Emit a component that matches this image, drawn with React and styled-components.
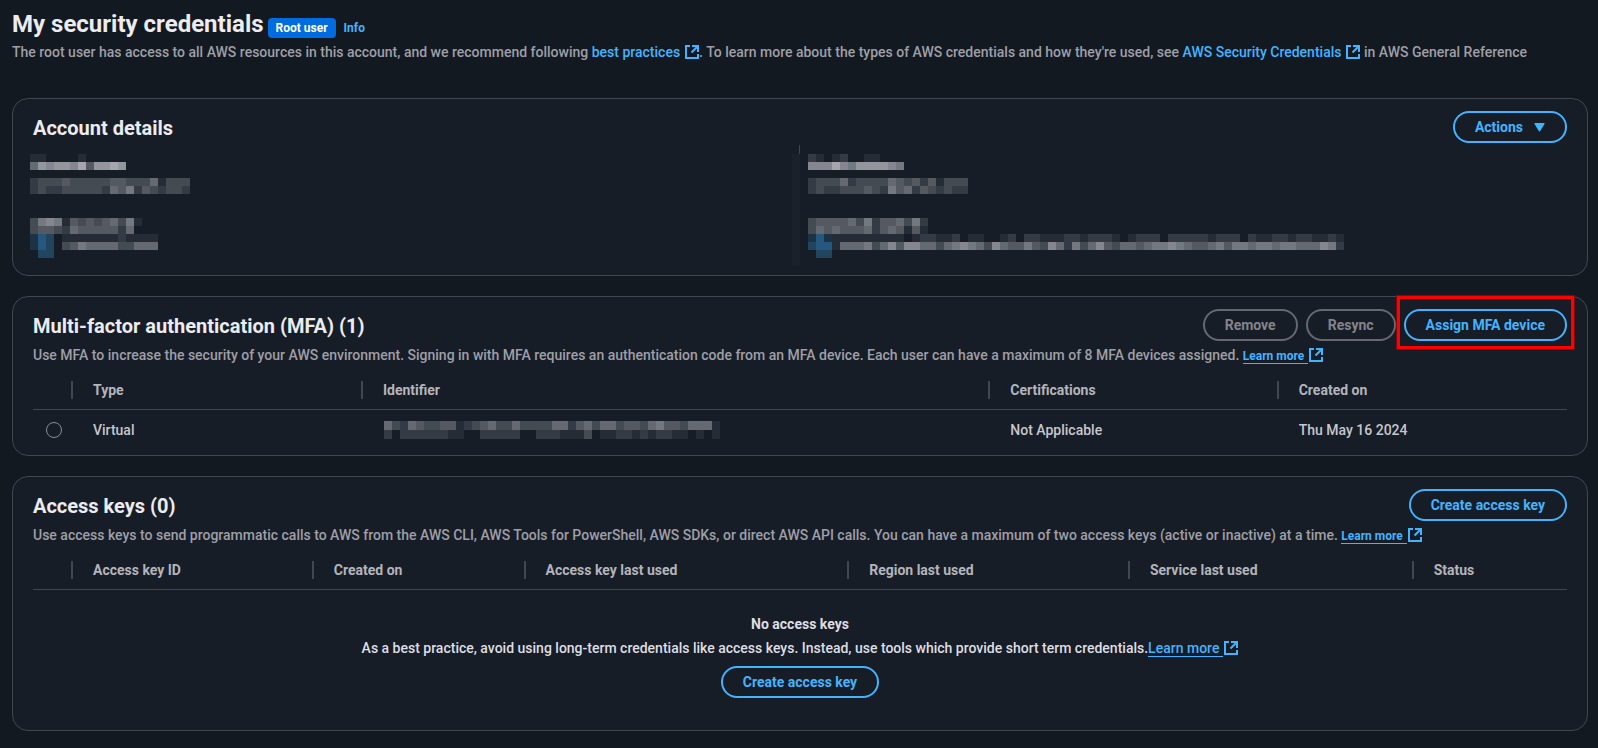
import styled, { createGlobalStyle } from "styled-components";

const GlobalStyle = createGlobalStyle`
    :root {
        --page: #121920;
        --panel: #161d26;
        --line: #424650;
        --heading: #ebebf0;
        --text: #c6c6cd;
        --muted: #9f9fa8;
        --column: #b4b4bb;
        --disabled: #656871;
        --link: #42b4ff;
        --badge: #006ce0;
    }
    * {
        box-sizing: border-box;
    }
    body {
        margin: 0;
        background-color: var(--page);
        color: var(--text);
        font-family: Roboto, "Noto Sans", sans-serif;
        font-size: 14px;
        line-height: 20px;
    }
`;

const Page = styled.main`
    display: flex;
    flex-direction: column;
    gap: 20px;
    padding: 8px 10px 17px 12px;
`;

const PageHeader = styled.header`
    padding-bottom: 16px;
`;

const TitleRow = styled.div`
    display: flex;
    align-items: baseline;
`;

const PageTitle = styled.h1`
    margin: 0;
    color: var(--heading);
    font-size: 24px;
    line-height: 32px;
`;

const Badge = styled.span`
    margin-left: 4px;
    padding: 0 8px;
    border-radius: 4px;
    background-color: var(--badge);
    color: #ffffff;
    font-size: 12px;
    font-weight: 700;
    line-height: 20px;
`;

const InfoLink = styled.a`
    margin-left: 8px;
    color: var(--link);
    font-size: 12px;
    font-weight: 700;
    text-decoration: none;
`;

const Description = styled.p`
    margin: ${({ $page }) => ($page ? "2px 0 0" : "4px 0 6px")};
    color: var(--muted);
    font-weight: 500;
`;

const Panel = styled.section`
    padding: 12px 20px 4px;
    border: 1px solid var(--line);
    border-radius: 16px;
    background-color: var(--panel);
`;

const PanelHeader = styled.div`
    display: flex;
    align-items: center;
    justify-content: space-between;
`;

const PanelTitle = styled.h2`
    margin: 0;
    padding-top: 2px;
    color: var(--heading);
    font-size: 20px;
    line-height: 24px;
`;

const Actions = styled.div`
    display: flex;
    gap: 8px;
`;

const Button = styled.button`
    display: inline-flex;
    align-items: center;
    gap: 11px;
    height: 32px;
    padding: 0 20px;
    border: 2px solid var(--link);
    border-radius: 16px;
    background: none;
    color: var(--link);
    font: inherit;
    font-weight: 700;
    cursor: pointer;
    &:disabled {
        border-color: var(--disabled);
        color: #83848c;
        cursor: default;
    }
`;

// red frame drawn over the button and its surroundings
const Highlight = styled.div`
    position: relative;
    display: flex;
    &::after {
        content: "";
        position: absolute;
        inset: -13px -7px -8px;
        border: 3px solid #ff0000;
        outline: 1px solid #7d0a0d;
        pointer-events: none;
    }
`;

const Anchor = styled.a`
    color: var(--link);
    font-size: ${({ $small }) => ($small ? "12px" : "14px")};
    font-weight: ${({ $small }) => ($small ? 700 : 500)};
    text-decoration: none;
    white-space: nowrap;
`;

const AnchorText = styled.span`
    margin-right: 1px;
    padding-right: 4px;
    border-bottom: ${({ $underline }) => ($underline ? "1px solid" : "none")};
`;

const ExternalSvg = styled.svg`
    width: 14px;
    height: 14px;
    vertical-align: -2px;
`;

const DetailsGrid = styled.div`
    display: grid;
    grid-template-columns: 1fr 1fr;
    margin: 2px 14px 5px -3px;
`;

const Details = styled.div`
    display: flex;
    gap: 8px;
`;

const DetailsBody = styled.div`
    padding-top: 9px;
`;

const Separator = styled.div`
    display: flex;
    flex-direction: column;
    width: 8px;
    &::before {
        content: "";
        height: 9px;
        border-right: 1px solid var(--line);
    }
    &::after {
        content: "";
        flex: 1;
        background-color: #1a212a;
    }
`;

const MosaicSvg = styled.svg`
    display: block;
`;

const Table = styled.table`
    width: 100%;
    border-collapse: collapse;
    table-layout: fixed;
`;

const Column = styled.col`
    width: ${({ $width }) => $width};
`;

const HeadCell = styled.th`
    height: 37px;
    padding: 0;
    border-bottom: 1px solid var(--line);
    color: var(--column);
    text-align: left;
    &:last-child > div {
        border-right: none;
    }
`;

const HeadLabel = styled.div`
    height: 18px;
    padding-left: 20px;
    border-right: 2px solid var(--line);
    line-height: 18px;
`;

const Cell = styled.td`
    height: 42px;
    padding: 0 0 0 ${({ $inset }) => $inset || "20px"};
    font-weight: 500;
`;

const Radio = styled.input`
    display: block;
    appearance: none;
    width: 16px;
    height: 16px;
    margin: 0;
    border: 1px solid #8c8c94;
    border-radius: 50%;
    &:checked {
        border: 5px solid var(--link);
    }
`;

const Empty = styled.div`
    display: flex;
    flex-direction: column;
    align-items: center;
    padding: 24px 0 28px;
    color: #dedee3;
    font-weight: 500;
`;

const EmptyText = styled.p`
    margin: 4px 0 8px;
`;

const ownerRows = [
    "11....1",
    "587887948898",
    "",
    "23334333334433351333",
    "23223333325462432332",
    "",
    "",
    "",
    "36761434345361",
    "3443254444425",
    "acb.111111121111",
    "acb.346555533555",
    ".bb",
    "",
];

const canonicalRows = [
    "21.12..11",
    "777976888876",
    "",
    "23335233335434241333",
    "23223334326452432322",
    "",
    "",
    "",
    "344445362445362",
    "354544452454141",
    "aca111111111.122112.11..12.221112212221.1222.222221222.211221221121",
    "bcc1555635747755356765375446437526357435545667654456466566566555762",
    ".bb",
    "",
];

const identifierRows = [
    ".532543344123453353333552453553443564435551",
    ".2022222211..22222..2221113.112212122110101",
];

const tints = { a: "#1b3345", b: "#22455f", c: "#25587c" };

// Each character is one block: a digit is a grey level, a letter a blue tint.
const Mosaic = ({ rows, rowHeight = 8, label }) => {
    const width = Math.max(...rows.map((row) => row.length)) * 8;
    return (
        <MosaicSvg width={width} height={rows.length * rowHeight} role="img" aria-label={label} shapeRendering="crispEdges">
            {rows.map((row, y) =>
                [...row].map((cell, x) => {
                    if (cell === "." || cell === "0") return null;
                    return (
                        <rect
                            key={`${x}-${y}`}
                            x={x * 8}
                            y={y * rowHeight}
                            width={8}
                            height={rowHeight}
                            fill={tints[cell] || "#b4b5bc"}
                            fillOpacity={tints[cell] ? 1 : cell / 10}
                        />
                    );
                })
            )}
        </MosaicSvg>
    );
};

const External = () => (
    <ExternalSvg viewBox="0 0 14 14" fill="none" stroke="currentColor" strokeWidth="2" aria-hidden="true">
        <path d="M5 1H1V13H13V9" />
        <path d="M7 1H13V7M13 1L6.5 7.5" />
    </ExternalSvg>
);

const ExternalLink = ({ children, small, underline }) => (
    <Anchor href="#" $small={small}>
        <AnchorText $underline={underline}>{children}</AnchorText>
        <External />
    </Anchor>
);

const TableHead = ({ columns }) => (
    <>
        <colgroup>
            <Column $width="40px" />
            {columns.map(({ name, width }) => (
                <Column key={name} $width={width} />
            ))}
        </colgroup>
        <thead>
            <tr>
                <HeadCell aria-label="Selection">
                    <HeadLabel />
                </HeadCell>
                {columns.map(({ name }) => (
                    <HeadCell key={name} scope="col">
                        <HeadLabel>{name}</HeadLabel>
                    </HeadCell>
                ))}
            </tr>
        </thead>
    </>
);

const mfaColumns = [
    { name: "Type", width: "18.9%" },
    { name: "Identifier", width: "40.9%" },
    { name: "Certifications", width: "18.8%" },
    { name: "Created on", width: "auto" },
];

const keyColumns = [
    { name: "Access key ID", width: "15.7%" },
    { name: "Created on", width: "13.8%" },
    { name: "Access key last used", width: "21.1%" },
    { name: "Region last used", width: "18.3%" },
    { name: "Service last used", width: "18.5%" },
    { name: "Status", width: "auto" },
];

const AccountDetails = () => (
    <Panel>
        <PanelHeader>
            <PanelTitle>Account details</PanelTitle>
            <Button type="button">
                Actions
                <svg width="11" height="9" viewBox="0 0 11 9" fill="currentColor" aria-hidden="true">
                    <path d="M1 0h9q1 0 .5 1L6.2 8q-.7 1-1.4 0L.5 1Q0 0 1 0z" />
                </svg>
            </Button>
        </PanelHeader>
        <DetailsGrid>
            <DetailsBody>
                <Mosaic rows={ownerRows} label="Hidden account name and ID" />
            </DetailsBody>
            <Details>
                <Separator />
                <DetailsBody>
                    <Mosaic rows={canonicalRows} label="Hidden email and canonical user ID" />
                </DetailsBody>
            </Details>
        </DetailsGrid>
    </Panel>
);

const MfaDevices = () => (
    <Panel>
        <PanelHeader>
            <PanelTitle>Multi-factor authentication (MFA) (1)</PanelTitle>
            <Actions>
                <Button type="button" disabled>Remove</Button>
                <Button type="button" disabled>Resync</Button>
                <Highlight>
                    <Button type="button">Assign MFA device</Button>
                </Highlight>
            </Actions>
        </PanelHeader>
        <Description>
            Use MFA to increase the security of your AWS environment. Signing in with MFA requires an authentication code
            from an MFA device. Each user can have a maximum of 8 MFA devices assigned.{" "}
            <ExternalLink small underline>Learn more</ExternalLink>
        </Description>
        <Table>
            <TableHead columns={mfaColumns} />
            <tbody>
                <tr>
                    <Cell $inset="13px">
                        <Radio type="radio" name="device" aria-label="Virtual device" />
                    </Cell>
                    <Cell>Virtual</Cell>
                    <Cell $inset="13px">
                        <Mosaic rows={identifierRows} rowHeight={9} label="Hidden identifier" />
                    </Cell>
                    <Cell>Not Applicable</Cell>
                    <Cell>Thu May 16 2024</Cell>
                </tr>
            </tbody>
        </Table>
    </Panel>
);

const AccessKeys = () => (
    <Panel>
        <PanelHeader>
            <PanelTitle>Access keys (0)</PanelTitle>
            <Button type="button">Create access key</Button>
        </PanelHeader>
        <Description>
            Use access keys to send programmatic calls to AWS from the AWS CLI, AWS Tools for PowerShell, AWS SDKs, or
            direct AWS API calls. You can have a maximum of two access keys (active or inactive) at a time.{" "}
            <ExternalLink small underline>Learn more</ExternalLink>
        </Description>
        <Table>
            <TableHead columns={keyColumns} />
        </Table>
        <Empty>
            <strong>No access keys</strong>
            <EmptyText>
                As a best practice, avoid using long-term credentials like access keys. Instead, use tools which provide
                short term credentials.<ExternalLink underline>Learn more</ExternalLink>
            </EmptyText>
            <Button type="button">Create access key</Button>
        </Empty>
    </Panel>
);

const App = () => {
    return (
        <Page>
            <GlobalStyle />
            <PageHeader>
                <TitleRow>
                    <PageTitle>My security credentials</PageTitle>
                    <Badge>Root user</Badge>
                    <InfoLink href="#">Info</InfoLink>
                </TitleRow>
                <Description $page>
                    The root user has access to all AWS resources in this account, and we recommend following{" "}
                    <ExternalLink>best practices</ExternalLink>. To learn more about the types of AWS credentials and how
                    they're used, see <ExternalLink>AWS Security Credentials</ExternalLink> in AWS General Reference
                </Description>
            </PageHeader>
            <AccountDetails />
            <MfaDevices />
            <AccessKeys />
        </Page>
    );
};

export default App;
